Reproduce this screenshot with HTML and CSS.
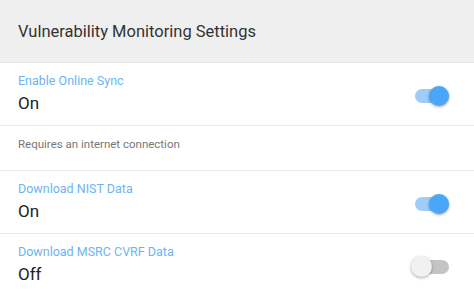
FILE: index.html
```html
<!DOCTYPE html>
<html lang="en">
<head>
    <meta charset="UTF-8">
    <meta name="viewport" content="width=device-width, initial-scale=1.0">
    <title>Vulnerability Monitoring Settings</title>
    <link rel="stylesheet" href="styles.css">
</head>
<body>
    <div class="settings">
        <div class="settings-header">Vulnerability Monitoring Settings</div>

        <div class="setting-row">
            <div class="setting-text">
                <div class="setting-label">Enable Online Sync</div>
                <div class="setting-value">On</div>
            </div>
            <div class="toggle toggle-on"><div class="toggle-thumb"></div></div>
        </div>

        <div class="setting-note">Requires an internet connection</div>

        <div class="setting-row">
            <div class="setting-text">
                <div class="setting-label">Download NIST Data</div>
                <div class="setting-value">On</div>
            </div>
            <div class="toggle toggle-on"><div class="toggle-thumb"></div></div>
        </div>

        <div class="setting-row">
            <div class="setting-text">
                <div class="setting-label">Download MSRC CVRF Data</div>
                <div class="setting-value">Off</div>
            </div>
            <div class="toggle"><div class="toggle-thumb"></div></div>
        </div>
    </div>
</body>
</html>
```

FILE: styles.css
```css
body {
    margin: 0;
    background-color: #fff;
    font-family: Roboto, 'Noto Sans', sans-serif;
}

.settings {
    display: flex;
    flex-direction: column;
}

.settings-header {
    height: 62px;
    background-color: #efefef;
    color: #333;
    font-size: 16.5px;
    display: flex;
    align-items: center;
    padding: 0 18px;
    border-bottom: 1px solid #e6e6e6;
}

.setting-row {
    height: 63px;
    box-sizing: border-box;
    display: flex;
    flex-direction: row;
    align-items: flex-start;
    justify-content: space-between;
    padding: 10px 25px 0 18px;
    border-bottom: 1px solid #ebebeb;
}

.setting-row:last-child {
    border-bottom: none;
}

.setting-text {
    display: flex;
    flex-direction: column;
    gap: 3px;
}

.setting-label {
    color: #6cb4f2;
    font-size: 12.5px;
    line-height: 16px;
}

.setting-value {
    color: #222;
    font-size: 17px;
    line-height: 22px;
}

.setting-note {
    height: 45px;
    box-sizing: border-box;
    padding: 10px 18px 0;
    line-height: 16px;
    color: #777;
    font-size: 11.5px;
    border-bottom: 1px solid #ebebeb;
}

.toggle {
    position: relative;
    margin-top: 16px;
    width: 34px;
    height: 14px;
    border-radius: 7px;
    background-color: #c4c4c4;
}

.toggle-on {
    background-color: #9dcdf8;
}

.toggle-thumb {
    position: absolute;
    top: -4px;
    left: -4px;
    width: 21px;
    height: 21px;
    border-radius: 50%;
    background-color: #f1f1f1;
    box-shadow: 0 1px 3px rgba(0, 0, 0, 0.35);
}

.toggle-on .toggle-thumb {
    top: -3px;
    left: auto;
    right: 0;
    width: 20px;
    height: 20px;
    background-color: #4aa6f6;
}
```
